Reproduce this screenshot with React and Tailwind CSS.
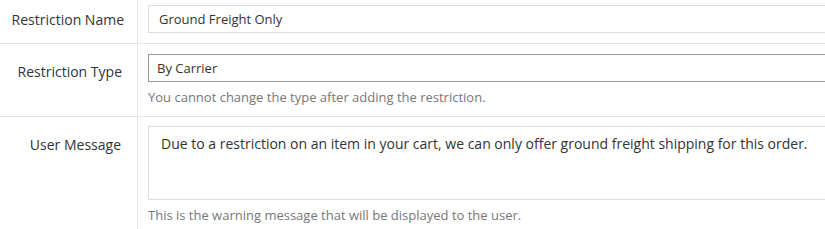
import React from 'react';

// Shipping restriction form - label column + fields column with row dividers

const font = { fontFamily: '"Open Sans", "Noto Sans", sans-serif' };

export default function App() {
  return (
    <div className="w-[825px] h-[229px] overflow-hidden bg-white text-[#333]" style={font}>
      <div className="w-[880px]">
        {/* Restriction Name */}
        <div className="flex border-b border-[#e6e6e6]">
          <div className="w-[138px] shrink-0 border-r border-[#e6e6e6] pr-[13px] pt-[10px] h-[43px] text-right text-[14px] leading-[20px]">
            Restriction Name
          </div>
          <div className="flex-1 pl-[10px] pt-[5px] pb-[10px]">
            <input
              readOnly
              value="Ground Freight Only"
              className="block w-full h-[28px] border border-[#dcdcdc] px-[10px] text-[13px] text-[#333] outline-none"
              style={font}
            />
          </div>
        </div>

        {/* Restriction Type */}
        <div className="flex border-b border-[#e6e6e6]">
          <div className="w-[138px] shrink-0 border-r border-[#e6e6e6] pr-[15px] pt-[18px] text-right text-[14px] leading-[20px]">
            Restriction Type
          </div>
          <div className="flex-1 pl-[10px] pt-[10px] pb-[11px]">
            <div className="h-[28px] border border-[#9a9a9a] px-[8px] text-[13px] leading-[26px]">
              By Carrier
            </div>
            <p className="mt-[7px] text-[13px] leading-[16px] text-[#777]">
              You cannot change the type after adding the restriction.
            </p>
          </div>
        </div>

        {/* User Message */}
        <div className="flex">
          <div className="w-[138px] shrink-0 border-r border-[#e6e6e6] pr-[16px] pt-[18px] text-right text-[14px] leading-[20px] h-[113px]">
            User Message
          </div>
          <div className="flex-1 pl-[10px] pt-[9px]">
            <div className="h-[74px] border border-[#dcdcdc] px-[12px] pt-[7px] text-[14px] leading-[20px]">
              Due to a restriction on an item in your cart, we can only offer ground freight shipping for this order.
            </div>
            <p className="mt-[7px] text-[13px] leading-[16px] text-[#777]">
              This is the warning message that will be displayed to the user.
            </p>
          </div>
        </div>
      </div>
    </div>
  );
}
